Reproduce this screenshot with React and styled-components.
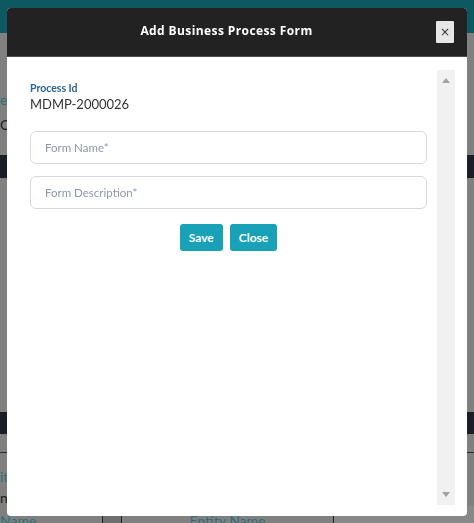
import React from "react";
import styled, {createGlobalStyle} from "styled-components";

const GlobalStyle = createGlobalStyle`
  html, body {
    margin: 0;
    padding: 0;
    height: 100%;
    overflow: hidden;
  }
  body {
    font-family: "Lato", "Liberation Sans", sans-serif;
    background: #808080;
  }
`;

// ---------- dimmed page behind the modal ----------
const Page = styled.div`
  width: 474px;
  height: 523px;
  background: #808080;
  display: flex;
  flex-direction: column;
  overflow: hidden;
`;

const TopBar = styled.div`
  height: 33px;
  flex-shrink: 0;
  background: #0e5861;
`;

const Details = styled.div`
  height: 122px;
  flex-shrink: 0;
  display: flex;
  flex-direction: column;
  padding-top: 58px;
  box-sizing: border-box;
  row-gap: 8px;
`;

const PageText = styled.div`
  font-size: 14px;
  line-height: 17px;
  white-space: nowrap;
  color: ${p => p.$teal ? "#2f6f78" : "#1a1a1a"};
`;

const Band = styled.div`
  height: ${p => p.$h}px;
  flex-shrink: 0;
  background: #1b1e27;
`;

const Filler = styled.div`
  height: ${p => p.$h}px;
  flex-shrink: 0;
  border-bottom: ${p => p.$line ? "1px solid #2a2a2a" : "none"};
`;

const Rows = styled.div`
  display: flex;
  flex-direction: column;
  padding-top: 15px;
  row-gap: 4px;
`;

const TableRow = styled.div`
  display: grid;
  grid-template-columns: 102px 19px 212px 1fr;
  height: 20px;
  flex-shrink: 0;
`;

const Cell = styled.div`
  border-left: ${p => p.$first ? "none" : "1px solid #222"};
  background: ${p => p.$dark ? "#6f6f6f" : p.$light ? "#888" : "transparent"};
  color: #2f6f78;
  font-size: 14px;
  padding-top: 6px;
  text-align: ${p => p.$first ? "left" : "center"};
  white-space: nowrap;
`;

// ---------- modal ----------
const Overlay = styled.div`
  position: fixed;
  inset: 0;
  padding: 8px 7px 7px;
  box-sizing: border-box;
`;

const Modal = styled.div`
  width: 460px;
  height: 508px;
  background: #fff;
  border-radius: 4px;
  display: flex;
  flex-direction: column;
  overflow: hidden;
`;

const Header = styled.div`
  height: 49px;
  flex-shrink: 0;
  box-sizing: border-box;
  background: #222222;
  border-bottom: 1px solid #4d4d4d;
  display: flex;
  align-items: center;
  padding: 0 13px 2px 10px;
`;

const Title = styled.div`
  flex: 1;
  text-align: center;
  color: #fff;
  font-family: "Open Sans", "Liberation Sans", sans-serif;
  font-weight: 700;
  font-size: 12px;
  letter-spacing: 0.4px;
  margin-top: -2px;
`;

const CloseX = styled.button`
  width: 18px;
  height: 22px;
  border: none;
  border-radius: 1px;
  background: #e6e6e6;
  color: #333;
  font-family: "DejaVu Sans", sans-serif;
  font-size: 12px;
  line-height: 22px;
  padding: 0;
  margin-top: 2px;
  display: flex;
  align-items: center;
  justify-content: center;
`;

const Body = styled.div`
  flex: 1;
  display: flex;
  min-height: 0;
`;

const Content = styled.div`
  flex: 1;
  padding: 25px 10px 0 23px;
  display: flex;
  flex-direction: column;
`;

const Label = styled.div`
  font-size: 10.5px;
  line-height: 13px;
  font-weight: 700;
  color: #2a6596;
`;

const Value = styled.div`
  font-size: 13px;
  line-height: 16px;
  margin-top: 1px;
  color: #333;
`;

const Input = styled.input`
  height: 33px;
  box-sizing: border-box;
  width: 100%;
  margin-top: ${p => p.$mt}px;
  border: 1px solid #d6d9dd;
  border-radius: 6px;
  padding: 0 14px;
  font-family: "Lato", "Liberation Sans", sans-serif;
  font-size: 11.5px;
  color: #333;
  outline: none;

  &::placeholder {
    color: #8a99aa;
  }
`;

const Actions = styled.div`
  display: flex;
  justify-content: center;
  column-gap: 7px;
  margin-top: 15px;
`;

const Button = styled.button`
  height: 27px;
  padding: 0 9px;
  border: none;
  border-radius: 3px;
  background: #19a2b7;
  color: #fff;
  font-family: "Lato", "Liberation Sans", sans-serif;
  font-weight: 700;
  font-size: 12px;
`;

const ScrollTrack = styled.div`
  width: 18px;
  margin: 13px 12px 11px 0;
  background: #f1f1f1;
  display: flex;
  flex-direction: column;
  justify-content: space-between;
  align-items: center;
  padding: 8px 0;
  box-sizing: border-box;
`;

const Arrow = ({down}) => (
    <svg width="8" height="5" viewBox="0 0 8 5">
        <path d={down ? "M0 0 L8 0 L4 5 Z" : "M0 5 L8 5 L4 0 Z"} fill="#a3a3a3"/>
    </svg>
);

export default function App() {
    return (
        <>
            <GlobalStyle/>
            <Page>
                <TopBar/>
                <Details>
                    <PageText $teal>e</PageText>
                    <PageText>O</PageText>
                </Details>
                <Band $h={23}/>
                <Filler $h={234}/>
                <Band $h={22}/>
                <Filler $h={18} $line/>
                <Rows>
                    <PageText $teal>it</PageText>
                    <PageText>n</PageText>
                </Rows>
                <TableRow>
                    <Cell $first>Name</Cell>
                    <Cell $dark/>
                    <Cell>Entity Name</Cell>
                    <Cell $light/>
                </TableRow>
            </Page>

            <Overlay>
                <Modal>
                    <Header>
                        <Title>Add Business Process Form</Title>
                        <CloseX>×</CloseX>
                    </Header>
                    <Body>
                        <Content>
                            <Label>Process Id</Label>
                            <Value>MDMP-2000026</Value>
                            <Input $mt={19} placeholder="Form Name*"/>
                            <Input $mt={12} placeholder="Form Description*"/>
                            <Actions>
                                <Button>Save</Button>
                                <Button>Close</Button>
                            </Actions>
                        </Content>
                        <ScrollTrack>
                            <Arrow/>
                            <Arrow down/>
                        </ScrollTrack>
                    </Body>
                </Modal>
            </Overlay>
        </>
    );
}
